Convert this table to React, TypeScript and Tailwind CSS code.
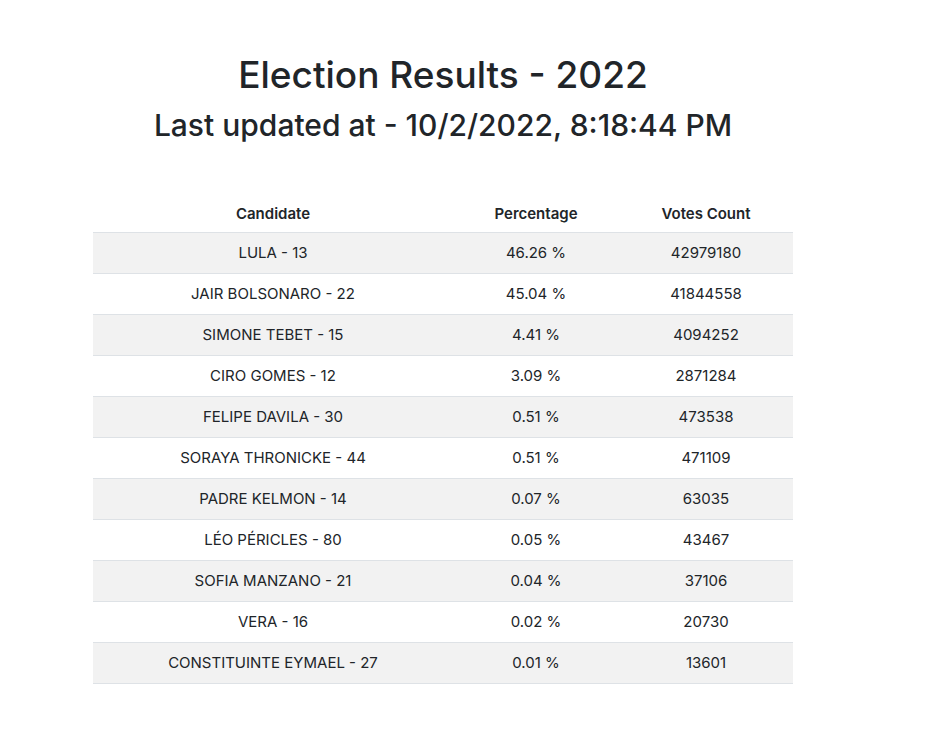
const rows = [
  { name: "LULA - 13", pct: "46.26 %", votes: "42979180" },
  { name: "JAIR BOLSONARO - 22", pct: "45.04 %", votes: "41844558" },
  { name: "SIMONE TEBET - 15", pct: "4.41 %", votes: "4094252" },
  { name: "CIRO GOMES - 12", pct: "3.09 %", votes: "2871284" },
  { name: "FELIPE DAVILA - 30", pct: "0.51 %", votes: "473538" },
  { name: "SORAYA THRONICKE - 44", pct: "0.51 %", votes: "471109" },
  { name: "PADRE KELMON - 14", pct: "0.07 %", votes: "63035" },
  { name: "LÉO PÉRICLES - 80", pct: "0.05 %", votes: "43467" },
  { name: "SOFIA MANZANO - 21", pct: "0.04 %", votes: "37106" },
  { name: "VERA - 16", pct: "0.02 %", votes: "20730" },
  { name: "CONSTITUINTE EYMAEL - 27", pct: "0.01 %", votes: "13601" },
];

export default function App() {
  return (
    <div className="min-h-[751px] bg-white font-['Inter',sans-serif] text-[#212529]">
      <div className="w-[886px] pt-[53px] text-center">
        <h1 className="text-[37px] leading-[1.2] font-medium">Election Results - 2022</h1>
        <h2 className="mt-[10px] text-[30px] leading-[1.2] font-medium">
          Last updated at - 10/2/2022, 8:18:44 PM
        </h2>
        <table className="mx-auto mt-[49px] w-[700px] border-collapse text-[15px]">
          <thead>
            <tr className="border-b border-[#dee2e6]">
              <th className="w-[360px] px-2 pt-[10px] pb-[6px] leading-6 font-semibold">Candidate</th>
              <th className="w-[166px] px-2 pt-[10px] pb-[6px] leading-6 font-semibold">Percentage</th>
              <th className="w-[174px] px-2 pt-[10px] pb-[6px] leading-6 font-semibold">Votes Count</th>
            </tr>
          </thead>
          <tbody>
            {rows.map((r, i) => (
              <tr
                key={r.name}
                className={i % 2 === 0 ? "border-b border-[#dee2e6] bg-[#f2f2f2]" : "border-b border-[#dee2e6]"}
              >
                <td className="p-2 leading-6">{r.name}</td>
                <td className="p-2 leading-6">{r.pct}</td>
                <td className="p-2 leading-6">{r.votes}</td>
              </tr>
            ))}
          </tbody>
        </table>
      </div>
    </div>
  );
}
